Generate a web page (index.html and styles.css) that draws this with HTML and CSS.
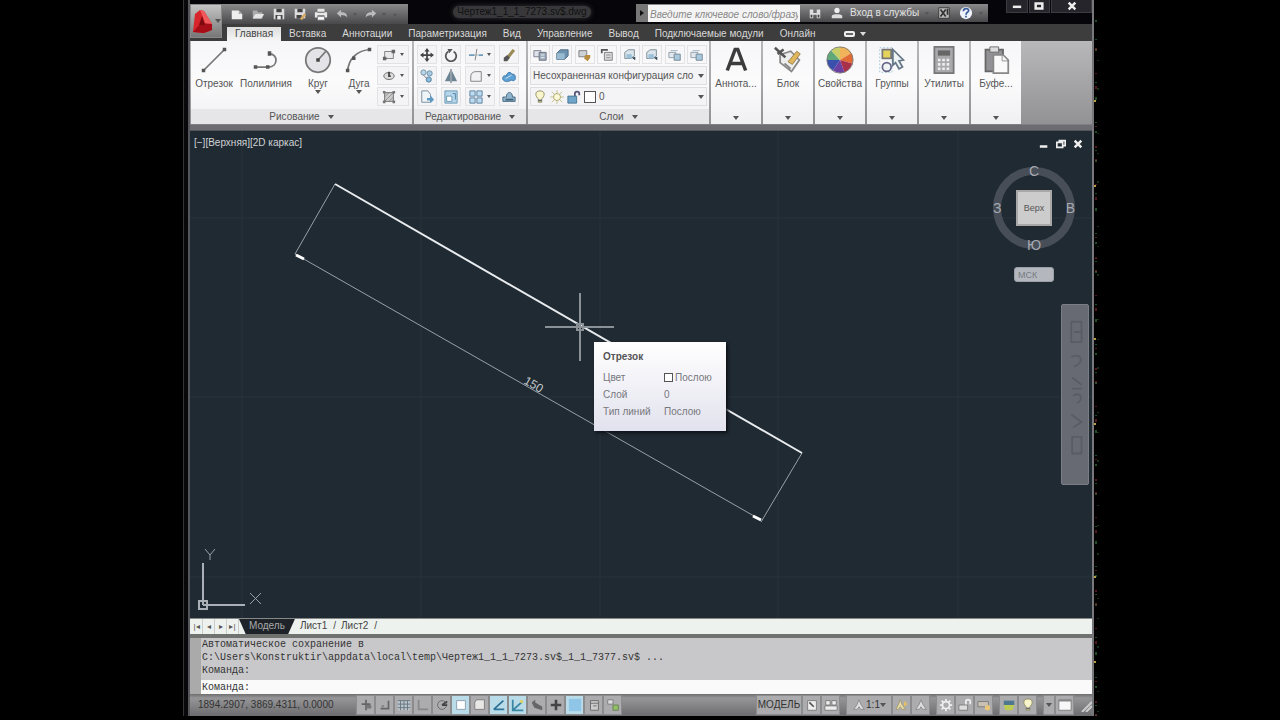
FILE: index.html
```html
<!DOCTYPE html>
<html lang="ru">
<head>
    <meta charset="UTF-8">
    <meta name="viewport" content="width=device-width, initial-scale=1.0">
    <title>Чертеж1_1_1_7273.sv$.dwg</title>
    <link rel="stylesheet" href="styles.css">
</head>
<body>
    <!-- Icon sprite -->
    <svg class="sprite" aria-hidden="true">
        <symbol id="i-new" viewBox="0 0 16 16"><path d="M2 4h8l4 4v6H2z" fill="#eee"/><path d="M10 4v4h4" fill="#aaa"/></symbol>
        <symbol id="i-open" viewBox="0 0 16 16"><path d="M2 4h5l1 2h5v7H2z" fill="#aaa"/><path d="M5 8h10l-3 5H2z" fill="#e4e4e4"/></symbol>
        <symbol id="i-save" viewBox="0 0 16 16"><path d="M2 2h12v12H2z" fill="#ddd"/><path d="M5 2h6v4H5zM4 9h8v5H4z" fill="#444"/><path d="M6 10h4v4H6z" fill="#eee"/></symbol>
        <symbol id="i-saveas" viewBox="0 0 16 16"><path d="M2 2h12v11H2z" fill="#ddd"/><path d="M5 2h6v4H5zM4 9h6v4H4z" fill="#444"/><path d="m8 13 5-6 2 2-5 6z" fill="#d9a860"/></symbol>
        <symbol id="i-print" viewBox="0 0 16 16"><path d="M4 2h8v4H4zM1 6h14v6H1z" fill="#e8e8e8"/><path d="M4 6h8M4 10h8" stroke="#555"/><path d="M4 11h8v4H4z" fill="#fff" stroke="#777"/></symbol>
        <symbol id="i-undo" viewBox="0 0 16 16"><path d="M2 7l5-4v3c5 0 7 2 7 6-1-2-3-3-7-3v3z" fill="#bbb"/></symbol>
        <symbol id="i-redo" viewBox="0 0 16 16"><path d="M14 7 9 3v3c-5 0-7 2-7 6 1-2 3-3 7-3v3z" fill="#bbb"/></symbol>
        <symbol id="i-find" viewBox="0 0 16 16"><path d="M2 4h4v4h4V4h4v10h-4v-4H6v4H2z" fill="#ddd"/><path d="M3 10h2v3H3zM11 10h2v3h-2z" fill="#444"/></symbol>
        <symbol id="i-user" viewBox="0 0 16 16"><circle cx="8" cy="5" r="3" fill="#eee"/><path d="M2 14v-3c2-2 10-2 12 0v3z" fill="#ddd"/></symbol>
        <symbol id="i-exchange" viewBox="0 0 16 16"><path d="M2 2h12v12H2z" fill="#bbb" stroke="#333"/><path d="m4 4 6 8M10 4l-6 8M12 3v7" stroke="#333" stroke-width="2"/></symbol>
        <symbol id="i-help" viewBox="0 0 16 16"><circle cx="8" cy="8" r="7" fill="#eef2fa"/><path d="M5 6c0-4 6-4 6-1 0 2-3 2-3 5M8 11v2" fill="none" stroke="#3b5c9a" stroke-width="2"/></symbol>

        <symbol id="i-rect" viewBox="0 0 16 16"><path d="M3 4h10v8H3z" fill="#e9e9ec" stroke="#777"/><path d="M1 10h4v4H1zM11 2h4v4h-4z" fill="#666"/></symbol>
        <symbol id="i-ellipse" viewBox="0 0 16 16"><ellipse cx="8" cy="8" rx="6" ry="4" fill="#ddd" stroke="#666"/><path d="M8 3v6M7 8h3" stroke="#444" stroke-width="2"/></symbol>
        <symbol id="i-hatch" viewBox="0 0 16 16"><path d="M3 3h10v10H3z" fill="#ccc" stroke="#666"/><path d="m3 8 5-5M3 13 13 3M8 13l5-5" stroke="#888"/><path d="M1 1h3v3H1zM12 1h3v3h-3zM1 12h3v3H1zM12 12h3v3h-3z" fill="#777"/></symbol>
        <symbol id="i-move" viewBox="0 0 16 16"><path d="M8 2v12M2 8h12" stroke="#444" stroke-width="2"/><path d="m8 0 3 4H5zM8 16l3-4H5zM0 8l4-3v6zM16 8l-4-3v6z" fill="#444"/></symbol>
        <symbol id="i-rotate" viewBox="0 0 16 16"><path d="M5 4a6 6 0 1 0 6 0" fill="none" stroke="#555" stroke-width="2"/><path d="M4 1h6L6 6z" fill="#555"/></symbol>
        <symbol id="i-trim" viewBox="0 0 16 16"><path d="M0 8h6M11 8h5" stroke="#6f9dbb" stroke-width="2"/><path d="M9 1 7 14" stroke="#777"/><path d="M5 8h6" stroke="#89a" stroke-dasharray="2 1"/></symbol>
        <symbol id="i-erase" viewBox="0 0 16 16"><path d="m5 10 7-9 3 2-7 9z" fill="#9a8b55"/><path d="m2 11 4-3 3 3-3 4H2z" fill="#555"/></symbol>
        <symbol id="i-copy" viewBox="0 0 16 16"><circle cx="4" cy="4" r="3" fill="#bcd5e6" stroke="#6b8ba2"/><circle cx="11" cy="5" r="3" fill="#a6c9e2" stroke="#6b8ba2"/><circle cx="10" cy="12" r="3" fill="#8bbbdc" stroke="#4f7c9b"/><path d="m4 7 4 4" stroke="#667"/></symbol>
        <symbol id="i-mirror" viewBox="0 0 16 16"><path d="M7 2v12H1zM9 2v12h6z" fill="#6b8494"/><path d="M8 0v16" stroke="#345"/></symbol>
        <symbol id="i-fillet" viewBox="0 0 16 16"><path d="M2 14V9c0-4 2-6 6-6h6v11z" fill="#f2f2f4" stroke="#777"/></symbol>
        <symbol id="i-cloud" viewBox="0 0 16 16"><path d="M1 12c-1-4 2-5 4-4 0-4 5-6 6-2 4-1 5 3 4 6-2 3-4 0-5 1-3 2-7 2-9-1z" fill="#5fa0d2" stroke="#3674a5"/><path d="m4 11 7-4" stroke="#d4e8f6"/></symbol>
        <symbol id="i-stretch" viewBox="0 0 16 16"><path d="M2 1h7l3 4v9H2z" fill="#eef4f8" stroke="#71879a"/><path d="M8 9h4V6l4 5-4 4v-3H8z" fill="#5c9ac4"/></symbol>
        <symbol id="i-scale" viewBox="0 0 16 16"><path d="M1 1h14v14H1z" fill="#b5d6ea" stroke="#6492b0"/><path d="M3 7h6v6H3z" fill="#fff" stroke="#6492b0"/><path d="M10 4h3v7" fill="none" stroke="#4d7f9f"/></symbol>
        <symbol id="i-array" viewBox="0 0 16 16"><g fill="#bddcf0" stroke="#55799a"><path d="M1 1h6v6H1zM9 1h6v6H9zM1 9h6v6H1zM9 9h6v6H9z"/></g></symbol>
        <symbol id="i-offset" viewBox="0 0 16 16"><path d="M1 13V8h4c0-7 7-7 7 0h3v5z" fill="#8fb4cc" stroke="#41627a"/><path d="M4 11h9" stroke="#41627a" stroke-width="2"/></symbol>

        <symbol id="i-layer1" viewBox="0 0 16 16"><path d="M1 3h8v7H1z" fill="#dde3e8" stroke="#778"/><path d="M7 5h8v9H7z" fill="#9fb1bf" stroke="#667"/><path d="M9 8h4M9 11h4" stroke="#eee"/></symbol>
        <symbol id="i-layer2" viewBox="0 0 16 16"><path d="M2 6l4-4h9v7l-4 4H2z" fill="#6c93b0" stroke="#4b667c"/><path d="M2 6h9v7H2z" fill="#99bbd2"/></symbol>
        <symbol id="i-layer3" viewBox="0 0 16 16"><path d="M1 3h9v7H1z" fill="#ccd2d8" stroke="#777"/><path d="M8 8h6v3l-3 4-4-3z" fill="#b98d3f"/></symbol>
        <symbol id="i-layer4" viewBox="0 0 16 16"><path d="M5 5h9v9H5z" fill="#d8dadd" stroke="#777"/><path d="M1 2h8M2 1v5" stroke="#555" stroke-width="2"/><path d="M7 8h5M7 11h5" stroke="#888"/></symbol>
        <symbol id="i-layer5" viewBox="0 0 16 16"><path d="M2 5l4-3h7v7l-4 3H2z" fill="#dbe4eb" stroke="#71838f"/><path d="M4 7h6v5H4z" fill="#9bc0d8"/><path d="m10 11 4 3v-4z" fill="#345"/></symbol>
        <symbol id="i-layer6" viewBox="0 0 16 16"><path d="M1 5h8v6H1z" fill="#e1e7ec" stroke="#8a9aa5"/><path d="M7 7h7v7H7z" fill="#a9c8dc" stroke="#6e8495"/><path d="M3 3h8" stroke="#9ab"/></symbol>

        <symbol id="i-bulb" viewBox="0 0 16 16"><path d="M8 1c7 0 5 7 2 9v4H6v-4C3 8 1 1 8 1z" fill="#f7f5c9" stroke="#8c8a60"/><path d="M6 12h4" stroke="#666" stroke-width="2"/></symbol>
        <symbol id="i-sun" viewBox="0 0 16 16"><path d="M8 0v16M0 8h16M2 2l12 12M14 2 2 14" stroke="#c1bd86"/><circle cx="8" cy="8" r="4" fill="#fbf9d8" stroke="#aaa463"/></symbol>
        <symbol id="i-lock" viewBox="0 0 16 16"><path d="M9 8V4c0-3 5-3 5 0v2" fill="none" stroke="#557" stroke-width="2"/><path d="M1 7h10v8H1z" fill="#6ea5c8" stroke="#44708f"/></symbol>

        <symbol id="i-dot" viewBox="0 0 16 16"><path d="M8 2v12M3 7h10" stroke="#666" stroke-width="2"/><path d="M8 8h6v4H8z" fill="#777"/></symbol>
        <symbol id="i-snap" viewBox="0 0 16 16"><path d="M12 3v9H3" fill="none" stroke="#666" stroke-width="2"/><path d="M4 8h3v3H4z" fill="#888"/></symbol>
        <symbol id="i-grid" viewBox="0 0 16 16"><path d="M1 3h14v11H1z" fill="#b8c4cc"/><path d="M1 3h14M1 7h14M1 11h14M4 3v11M8 3v11M12 3v11" stroke="#66727a"/></symbol>
        <symbol id="i-ortho" viewBox="0 0 16 16"><path d="M3 2v11h11" fill="none" stroke="#888" stroke-width="2"/></symbol>
        <symbol id="i-polar" viewBox="0 0 16 16"><circle cx="8" cy="8" r="5" fill="none" stroke="#666"/><path d="m8 8 6-4M8 8h6" stroke="#444" stroke-width="2"/></symbol>
        <symbol id="i-osnap" viewBox="0 0 16 16"><path d="M3 3h10v10H3z" fill="#fff" stroke="#89a"/></symbol>
        <symbol id="i-osnap3" viewBox="0 0 16 16"><path d="M4 2h9v11H2V5z" fill="#e9e6e6" stroke="#777"/></symbol>
        <symbol id="i-track" viewBox="0 0 16 16"><path d="M2 13h12M2 13 13 3" stroke="#2f7398" stroke-width="2"/></symbol>
        <symbol id="i-ducs" viewBox="0 0 16 16"><path d="M2 2v12h12M2 14 12 5" fill="none" stroke="#3b86a3" stroke-width="2"/><circle cx="12" cy="4" r="2" fill="#dcd26c"/></symbol>
        <symbol id="i-dyn" viewBox="0 0 16 16"><path d="m2 5 4-3v3l8 5v4l-9-3z" fill="#666"/></symbol>
        <symbol id="i-plus" viewBox="0 0 16 16"><path d="M8 2v12M2 8h12" stroke="#444" stroke-width="3"/></symbol>
        <symbol id="i-fill" viewBox="0 0 16 16"><path d="M1 1h14v14H1z" fill="#8fc6e8"/></symbol>
        <symbol id="i-props" viewBox="0 0 16 16"><path d="M4 3h9v11H4z" fill="#ccc" stroke="#666"/><path d="M4 6h9M7 9h4" stroke="#666"/></symbol>
        <symbol id="i-cycle" viewBox="0 0 16 16"><path d="M2 2h6v5H2z" fill="#ddd" stroke="#777"/><path d="M8 8h6v6H8z" fill="#93c16a" stroke="#627f49"/></symbol>
        <symbol id="i-page" viewBox="0 0 16 16"><path d="M3 3h10v11H3z" fill="#eee" stroke="#777"/><path d="m5 5 5 5" stroke="#555" stroke-width="2"/></symbol>
        <symbol id="i-views" viewBox="0 0 16 16"><path d="M1 9h14v5H1zM2 3h5v5H2zM9 3h5v5H9z" fill="#eee" stroke="#777"/></symbol>
        <symbol id="i-person" viewBox="0 0 16 16"><path d="m8 2 2 5 4 6h-4l-2-3-2 3H2l4-6z" fill="#ddd" stroke="#888"/></symbol>
        <symbol id="i-person2" viewBox="0 0 16 16"><path d="m6 2 2 5 4 6H8l-2-3-2 3H1l3-6z" fill="#e8d8a4" stroke="#997"/><path d="m11 3 3 4-4 3z" fill="#e9c25e"/></symbol>
        <symbol id="i-gear" viewBox="0 0 16 16"><path d="M8 1v14M1 8h14M3 3l10 10M13 3 3 13" stroke="#eee" stroke-width="2"/><circle cx="8" cy="8" r="4" fill="#aaa" stroke="#eee" stroke-width="2"/></symbol>
        <symbol id="i-lock2" viewBox="0 0 16 16"><path d="M9 8V4c0-3 5-3 5 0v3" fill="none" stroke="#eee" stroke-width="2"/><path d="M1 8h10v6H1z" fill="#ddd" stroke="#777"/></symbol>
        <symbol id="i-hw" viewBox="0 0 16 16"><path d="M1 4h12v6H1z" fill="#c9c1b4" stroke="#777"/><circle cx="12" cy="11" r="3" fill="#eac67a"/></symbol>
        <symbol id="i-status" viewBox="0 0 16 16"><path d="M2 3h12v5H2z" fill="#4e7790"/><path d="M2 8h12l-2 6H4z" fill="#bccb56"/></symbol>
        <symbol id="i-full" viewBox="0 0 16 16"><path d="M1 2h14v12H1z" fill="#f8f8f8" stroke="#777"/><path d="M1 3h14" stroke="#888" stroke-width="2"/></symbol>
    </svg>

    <div class="window">
        <header class="header">
            <button class="app-button" aria-label="Меню приложения">
                <svg width="22" height="28" viewBox="0 0 22 28">
                    <path d="M1 25 3 7 8 3l4 1 8 13v6l-8 3z" fill="#d8242b"/>
                    <path d="m8 3 4 1 8 13-6 1z" fill="#f0595c"/>
                    <path d="m1 25 8-9 11 1v6l-8 3z" fill="#a50e17"/>
                    <path d="m7 18 3-9 3 9z" fill="#7b0a10"/>
                </svg>
                <span class="caret"></span>
            </button>
            <div class="header-rows">
                <div class="titlebar">
                    <div class="quick-access">
                        <button aria-label="Создать"><svg><use href="#i-new"/></svg></button>
                        <button aria-label="Открыть"><svg><use href="#i-open"/></svg></button>
                        <button aria-label="Сохранить"><svg><use href="#i-save"/></svg></button>
                        <button aria-label="Сохранить как"><svg><use href="#i-saveas"/></svg></button>
                        <button aria-label="Печать"><svg><use href="#i-print"/></svg></button>
                        <button class="with-caret" aria-label="Отменить"><svg><use href="#i-undo"/></svg><span class="caret"></span></button>
                        <button class="with-caret" aria-label="Повторить"><svg><use href="#i-redo"/></svg><span class="caret"></span></button>
                        <button aria-label="Настройка панели"><span class="caret"></span></button>
                    </div>
                    <div class="title"><span>Чертеж1_1_1_7273.sv$.dwg</span></div>
                    <div class="infocenter">
                        <button class="expand" aria-label="Свернуть поиск"><span class="caret-right"></span></button>
                        <input type="text" aria-label="Поиск" placeholder="Введите ключевое слово/фразу">
                        <button aria-label="Найти"><svg><use href="#i-find"/></svg></button>
                        <button class="login"><svg><use href="#i-user"/></svg>Вход в службы<span class="caret"></span></button>
                        <button aria-label="Exchange"><svg><use href="#i-exchange"/></svg></button>
                        <button class="help" aria-label="Справка"><svg><use href="#i-help"/></svg><span class="caret"></span></button>
                    </div>
                    <div class="window-controls">
                        <button aria-label="Свернуть"><svg viewBox="0 0 12 12"><path d="M1 7h10" stroke="#eee" stroke-width="3"/></svg></button>
                        <button aria-label="Развернуть"><svg viewBox="0 0 12 12"><path d="M2 3h8v6H2z" fill="none" stroke="#eee" stroke-width="3"/></svg></button>
                        <button class="close" aria-label="Закрыть"><svg viewBox="0 0 12 12"><path d="m2 2 8 8M10 2l-8 8" stroke="#eee" stroke-width="3"/></svg></button>
                    </div>
                </div>
                <nav class="tabs">
                    <a class="active" href="#">Главная</a>
                    <a href="#">Вставка</a>
                    <a href="#">Аннотации</a>
                    <a href="#">Параметризация</a>
                    <a href="#">Вид</a>
                    <a href="#">Управление</a>
                    <a href="#">Вывод</a>
                    <a href="#">Подключаемые модули</a>
                    <a href="#">Онлайн</a>
                    <button class="tab-toggle" aria-label="Свернуть ленту"><span class="pill"></span><span class="caret"></span></button>
                </nav>
            </div>
        </header>

        <section class="ribbon">
            <div class="panel draw">
                <div class="panel-body">
                    <button class="tool">
                        <svg viewBox="0 0 32 32"><path d="M4 28 28 4" stroke="#777" stroke-width="2"/><path d="M2 26h4v4H2zM26 2h4v4h-4z" fill="#555"/></svg>
                        Отрезок
                    </button>
                    <button class="tool wide">
                        <svg viewBox="0 0 32 32"><path d="M4 24h15c11 0 11-15 1-15" fill="none" stroke="#777" stroke-width="2"/><path d="M2 22h4v4H2zM16 22h4v4h-4zM18 6h4v5h-4z" fill="#555"/></svg>
                        Полилиния
                    </button>
                    <button class="tool">
                        <svg viewBox="0 0 32 32"><circle cx="16" cy="16" r="14" fill="#e3e3e8" stroke="#777" stroke-width="2"/><path d="M16 16 25 6" stroke="#777" stroke-width="2"/><path d="M14 14h4v4h-4z" fill="#444"/></svg>
                        Круг
                        <span class="caret"></span>
                    </button>
                    <button class="tool narrow">
                        <svg viewBox="0 0 32 32"><path d="M3 29C4 14 14 5 29 4" fill="none" stroke="#777" stroke-width="2"/><path d="M1 26h4v4H1zM26 2h4v4h-4zM8 12h4v4H8z" fill="#555"/></svg>
                        Дуга
                        <span class="caret"></span>
                    </button>
                    <div class="small-grid">
                        <button class="with-caret" aria-label="Прямоугольник"><svg><use href="#i-rect"/></svg><span class="caret"></span></button>
                        <button class="with-caret" aria-label="Эллипс"><svg><use href="#i-ellipse"/></svg><span class="caret"></span></button>
                        <button class="with-caret" aria-label="Штриховка"><svg><use href="#i-hatch"/></svg><span class="caret"></span></button>
                    </div>
                </div>
                <button class="panel-title">Рисование <span class="caret"></span></button>
            </div>

            <div class="panel modify">
                <div class="panel-body">
                    <div class="small-grid four">
                        <button aria-label="Перенести"><svg><use href="#i-move"/></svg></button>
                        <button aria-label="Повернуть"><svg><use href="#i-rotate"/></svg></button>
                        <button class="with-caret" aria-label="Обрезать"><svg><use href="#i-trim"/></svg><span class="caret"></span></button>
                        <button aria-label="Стереть"><svg><use href="#i-erase"/></svg></button>
                        <button aria-label="Копировать"><svg><use href="#i-copy"/></svg></button>
                        <button aria-label="Зеркало"><svg><use href="#i-mirror"/></svg></button>
                        <button class="with-caret" aria-label="Сопряжение"><svg><use href="#i-fillet"/></svg><span class="caret"></span></button>
                        <button aria-label="Расчленить"><svg><use href="#i-cloud"/></svg></button>
                        <button aria-label="Растянуть"><svg><use href="#i-stretch"/></svg></button>
                        <button aria-label="Масштаб"><svg><use href="#i-scale"/></svg></button>
                        <button class="with-caret" aria-label="Массив"><svg><use href="#i-array"/></svg><span class="caret"></span></button>
                        <button aria-label="Подобие"><svg><use href="#i-offset"/></svg></button>
                    </div>
                </div>
                <button class="panel-title">Редактирование <span class="caret"></span></button>
            </div>

            <div class="panel layers">
                <div class="panel-body column">
                    <div class="layer-tools">
                        <button aria-label="Свойства слоя"><svg><use href="#i-layer1"/></svg></button>
                        <button aria-label="Сделать текущим"><svg><use href="#i-layer2"/></svg></button>
                        <button aria-label="Согласовать"><svg><use href="#i-layer3"/></svg></button>
                        <button aria-label="Предыдущий"><svg><use href="#i-layer4"/></svg></button>
                        <button aria-label="Изолировать"><svg><use href="#i-layer5"/></svg></button>
                        <button aria-label="Заморозить"><svg><use href="#i-layer5"/></svg></button>
                        <button aria-label="Отключить"><svg><use href="#i-layer6"/></svg></button>
                        <button aria-label="Включить все"><svg><use href="#i-layer6"/></svg></button>
                    </div>
                    <div class="combo">
                        <select aria-label="Конфигурация слоев"><option>Несохраненная конфигурация сло</option></select>
                        <span class="caret"></span>
                    </div>
                    <div class="combo">
                        <svg><use href="#i-bulb"/></svg>
                        <svg><use href="#i-sun"/></svg>
                        <svg><use href="#i-lock"/></svg>
                        <span class="swatch"></span>
                        <select aria-label="Слой"><option>0</option></select>
                        <span class="caret"></span>
                    </div>
                </div>
                <button class="panel-title">Слои <span class="caret"></span></button>
            </div>

            <button class="panel collapsed">
                <svg viewBox="0 0 32 32"><path d="M6 28 15 4h3l9 24M10 20h13" fill="none" stroke="#3c3c3c" stroke-width="4"/></svg>
                Аннота...
                <span class="caret"></span>
            </button>
            <button class="panel collapsed">
                <svg viewBox="0 0 32 32"><path d="m7 10 12-4 10 10-9 13-13-10z" fill="#ededed" stroke="#888" stroke-width="2"/><path d="m1 2 12 11M4 9l7-5" stroke="#555" stroke-width="3"/><path d="m16 18 10-12 4 3-9 12z" fill="#dfb65b" stroke="#927b4a"/><path d="m12 20 7 6" stroke="#888" stroke-width="2"/></svg>
                Блок
                <span class="caret"></span>
            </button>
            <button class="panel collapsed">
                <svg viewBox="0 0 32 32">
                    <path d="M16 16V1a15 15 0 0 1 13 7z" fill="#f0b35a"/>
                    <path d="M16 16 29 8a15 15 0 0 1 1 12z" fill="#e26a34"/>
                    <path d="m16 16 14 4a15 15 0 0 1-9 10z" fill="#a8304a"/>
                    <path d="m16 16 5 14a15 15 0 0 1-13-2z" fill="#6b40a0"/>
                    <path d="M16 16 8 28a15 15 0 0 1-7-12z" fill="#3b50ad"/>
                    <path d="M16 16H1A15 15 0 0 1 6 5z" fill="#60a878"/>
                    <path d="M16 16 6 5a15 15 0 0 1 10-4z" fill="#c9cf68"/>
                    <circle cx="16" cy="16" r="15" fill="none" stroke="#777"/>
                </svg>
                Свойства
                <span class="caret"></span>
            </button>
            <button class="panel collapsed">
                <svg viewBox="0 0 32 32"><path d="M2 2h14v28H2z" fill="none" stroke="#9ac4d6" stroke-dasharray="2 2"/><path d="M5 4h10v10H5z" fill="#e5d45c" stroke="#777" stroke-width="2"/><circle cx="10" cy="24" r="5" fill="#eef4f4" stroke="#668"  stroke-width="2"/><path d="m17 4 12 12-5 1 4 7-4 2-4-7-3 3z" fill="#eef3f3" stroke="#678" stroke-width="2"/></svg>
                Группы
                <span class="caret"></span>
            </button>
            <button class="panel collapsed">
                <svg viewBox="0 0 32 32"><path d="M5 1h22v30H5z" fill="#a9a9ad" stroke="#777" stroke-width="2"/><path d="M9 5h14v6H9z" fill="#666"/><path d="M9 16h14M9 21h14M9 26h14" stroke="#eee" stroke-width="3" stroke-dasharray="3 2"/></svg>
                Утилиты
                <span class="caret"></span>
            </button>
            <button class="panel collapsed">
                <svg viewBox="0 0 32 32"><path d="M4 4h20v25H4z" fill="#929296" stroke="#666" stroke-width="2"/><path d="M9 1h10v6H9z" fill="#ddd" stroke="#666"/><path d="M13 10h11l6 6v15H13z" fill="#fafafa" stroke="#888" stroke-width="2"/><path d="M23 10v7h7" fill="none" stroke="#888"/></svg>
                Буфе...
                <span class="caret"></span>
            </button>
        </section>

        <main class="canvas">
            <svg class="drawing">
                <path class="grid-line" d="M52 0v2000M231 0v2000M410 0v2000M588 0v2000M768 0v2000M0 87h4000M0 266h4000M0 446h4000"/>
                <path class="dim-line" d="M145 53 105 123M612 322 571 391M105 123 571 389"/>
                <path class="dim-arrow" d="m106 124 8 4M563 385l8 4"/>
                <path class="object-line" d="M145 53 612 322"/>
                <text class="dim-text" transform="translate(333 252) rotate(30)">150</text>
                <path class="cursor" d="M355 196h69M390 162v68M387 193h6v6h-6z"/>
            </svg>

            <div class="viewport-label">[−][Верхняя][2D каркас]</div>
            <div class="viewport-controls">
                <button aria-label="Свернуть вид"><svg viewBox="0 0 12 12"><path d="M1 9h9" stroke="#eee" stroke-width="3"/></svg></button>
                <button aria-label="Восстановить вид"><svg viewBox="0 0 12 12"><path d="M4 4V2h7v6H9M1 4h7v6H1z" fill="none" stroke="#eee" stroke-width="2"/></svg></button>
                <button aria-label="Закрыть вид"><svg viewBox="0 0 12 12"><path d="m2 2 8 8M10 2l-8 8" stroke="#eee" stroke-width="3"/></svg></button>
            </div>

            <div class="viewcube">
                <span class="north">С</span>
                <span class="west">З</span>
                <button>Верх</button>
                <span class="east">В</span>
                <span class="south">Ю</span>
            </div>
            <button class="ucs-menu">МСК</button>
            <div class="navbar">
                <svg viewBox="0 0 28 180"><g fill="none" stroke="#5a5c65" stroke-width="2"><path d="M10 18h11v22H10zM13 29h8M10 56c12-6 14 8 3 10M11 78l10 8M11 90h11M12 98c8-6 12 4 4 8M10 118l11 8-9 6M11 142h10v18H11z"/></g></svg>
            </div>

            <svg class="ucs-icon" viewBox="0 0 80 72">
                <path d="M13 17v42M13 59h42M9 55h8v8H9z" fill="none" stroke="#aab0b5" stroke-width="2"/>
                <path d="m15 3 5 6 5-6M20 9v5M60 47l11 11M71 47 60 58" fill="none" stroke="#99a1a7"/>
            </svg>

            <div class="tooltip">
                <h2>Отрезок</h2>
                <dl>
                    <dt>Цвет</dt><dd><span class="swatch"></span>Послою</dd>
                    <dt>Слой</dt><dd>0</dd>
                    <dt>Тип линий</dt><dd>Послою</dd>
                </dl>
            </div>
        </main>

        <nav class="layout-tabs">
            <button aria-label="Первый лист">|◂</button>
            <button aria-label="Предыдущий лист">◂</button>
            <button aria-label="Следующий лист">▸</button>
            <button aria-label="Последний лист">▸|</button>
            <a class="current" href="#">Модель</a>
            <a href="#">Лист1</a>
            <a href="#">Лист2</a>
        </nav>

        <section class="command">
            <div class="command-log">Автоматическое сохранение в<br>C:\Users\Konstruktir\appdata\local\temp\Чертеж1_1_1_7273.sv$_1_1_7377.sv$ ...<br>Команда:</div>
            <div class="command-line">
                <label for="command-input">Команда:</label>
                <input id="command-input" type="text">
            </div>
        </section>

        <footer class="status">
            <div class="coords">1894.2907, 3869.4311, 0.0000</div>
            <div class="modes">
                <button aria-label="Зависимости"><svg><use href="#i-dot"/></svg></button>
                <button aria-label="Шаг"><svg><use href="#i-snap"/></svg></button>
                <button aria-label="Сетка"><svg><use href="#i-grid"/></svg></button>
                <button aria-label="Орто"><svg><use href="#i-ortho"/></svg></button>
                <button aria-label="Отслеживание"><svg><use href="#i-polar"/></svg></button>
                <button class="on" aria-label="Привязка"><svg><use href="#i-osnap"/></svg></button>
                <button aria-label="3D привязка"><svg><use href="#i-osnap3"/></svg></button>
                <button class="on" aria-label="Объектное отслеживание"><svg><use href="#i-track"/></svg></button>
                <button class="on" aria-label="ДПСК"><svg><use href="#i-ducs"/></svg></button>
                <button aria-label="Динамический ввод"><svg><use href="#i-dyn"/></svg></button>
                <button aria-label="Вес линий"><svg><use href="#i-plus"/></svg></button>
                <button class="on" aria-label="Прозрачность"><svg><use href="#i-fill"/></svg></button>
                <button aria-label="Быстрые свойства"><svg><use href="#i-props"/></svg></button>
                <button aria-label="Циклический выбор"><svg><use href="#i-cycle"/></svg></button>
            </div>
            <div class="modes right">
                <button class="text">МОДЕЛЬ</button>
                <button aria-label="Листы"><svg><use href="#i-page"/></svg></button>
                <button aria-label="Виды"><svg><use href="#i-views"/></svg></button>
            </div>
            <div class="modes">
                <button class="text scale"><svg><use href="#i-person"/></svg>1:1<span class="caret"></span></button>
                <button aria-label="Видимость аннотаций"><svg><use href="#i-person2"/></svg></button>
                <button aria-label="Автомасштаб"><svg><use href="#i-person"/></svg></button>
            </div>
            <div class="modes">
                <button aria-label="Рабочее пространство"><svg><use href="#i-gear"/></svg></button>
                <button aria-label="Блокировка"><svg><use href="#i-lock2"/></svg></button>
                <button aria-label="Ускорение"><svg><use href="#i-hw"/></svg></button>
            </div>
            <div class="modes">
                <button aria-label="Состояние"><svg><use href="#i-status"/></svg></button>
                <button aria-label="Изоляция объектов"><svg><use href="#i-bulb"/></svg></button>
            </div>
            <div class="modes">
                <button class="menu" aria-label="Меню строки состояния"><span class="caret"></span></button>
                <button aria-label="Очистить экран"><svg><use href="#i-full"/></svg></button>
            </div>
            <svg class="grip" viewBox="0 0 12 14"><path d="M2 14 12 4M6 14l6-6" stroke="#ccc" stroke-width="2"/></svg>
        </footer>

        <!-- Speckled edge along the right side -->
        <svg class="noise">
            <path d="M4 20v3000" stroke="#3f9a4b" stroke-dasharray="2 17 1 9 2 31 1 14 3 22 1 8"/>
            <path d="M4 48v3000" stroke="#a03038" stroke-dasharray="2 23 1 12 3 37 1 19 2 11"/>
            <path d="M3 100v3000" stroke="#b8a040" stroke-width="2" stroke-dasharray="2 83 2 151"/>
            <path d="M6 60v3000" stroke="#2b5e33" stroke-dasharray="1 27 2 43 1 19"/>
        </svg>
    </div>
</body>
</html>
```

FILE: styles.css
```css
* {
    box-sizing: border-box;
}

body {
    margin: 0;
    padding: 0 186px 4px 188px;
    background-color: #000;
    font-family: "Liberation Sans", Arial, sans-serif;
    font-size: 10px;
    line-height: 12px;
    color: #555;
}

button,
input,
select {
    margin: 0;
    padding: 0;
    border: none;
    background: none;
    font: inherit;
    color: inherit;
}

a {
    color: inherit;
    text-decoration: none;
}

.sprite {
    position: absolute;
    width: 0;
    height: 0;
}

.window {
    position: relative;
    display: flex;
    flex-direction: column;
    min-height: calc(100vh - 4px);
    border-left: 2px solid #55555c;
    border-right: 2px solid #77777c;
    box-shadow: -4px 0 0 #08080a, -5px 0 0 #333338;
}

.caret {
    display: inline-block;
    flex: none;
    border: 3px solid transparent;
    border-top: 4px solid #555;
    border-bottom: none;
}

.caret-right {
    border: 3px solid transparent;
    border-left: 4px solid #111;
    border-right: none;
}

/* Header */
.header {
    display: flex;
    background: linear-gradient(#06060a 24px, #3d3d3d 24px);
}

.header-rows {
    flex: 1;
    min-width: 0;
}

.app-button {
    display: flex;
    align-items: center;
    justify-content: center;
    gap: 1px;
    width: 32px;
    height: 34px;
    margin-top: 4px;
    background: linear-gradient(#c4c4c4, #777);
    border: 1px solid #888;
}

.titlebar {
    display: flex;
    height: 24px;
}

.titlebar svg {
    display: block;
    width: 14px;
    height: 14px;
}

.quick-access,
.infocenter {
    display: flex;
    align-items: center;
    margin-top: 4px;
    height: 20px;
    background: linear-gradient(#8a8a8c, #48484a);
}

.quick-access {
    width: 186px;
    gap: 7px;
    padding: 0 6px 0 8px;
}

.with-caret {
    display: flex;
    align-items: center;
    gap: 4px;
}

.title {
    flex: 1;
    display: flex;
    align-items: center;
    justify-content: center;
    min-width: 0;
    overflow: hidden;
    white-space: nowrap;
    color: #111;
}

.title span {
    padding: 0 4px;
    border-radius: 6px;
    background-color: #38383b;
    box-shadow: 0 0 5px #38383b;
}

.infocenter {
    width: 352px;
    height: 18px;
    gap: 8px;
    color: #e2e2e2;
}

.infocenter .expand {
    display: flex;
    justify-content: center;
    align-items: center;
    width: 12px;
    height: 18px;
    margin-right: -8px;
    background-color: #777;
}

.infocenter input {
    width: 152px;
    height: 17px;
    padding: 2px 2px 0;
    background-color: #f4f4f4;
    font-style: italic;
}

.infocenter input::placeholder {
    color: #888;
    opacity: 1;
}

.login,
.help {
    display: flex;
    align-items: center;
    gap: 6px;
}

.login {
    white-space: nowrap;
}

.window-controls {
    display: flex;
    gap: 1px;
    width: 86px;
    height: 13px;
    margin-left: 18px;
}

.window-controls button {
    flex: 1;
    display: flex;
    justify-content: center;
    align-items: center;
    background-color: #25252b;
    border: 1px solid #3b3b42;
    border-top: none;
}

.window-controls .close {
    flex: 2;
}

.window-controls svg {
    width: 10px;
    height: 10px;
}

/* Ribbon tabs */
.tabs {
    display: flex;
    height: 17px;
    padding: 3px 0 0 5px;
    line-height: 13px;
    color: #d8d8d8;
    white-space: nowrap;
}

.tabs a {
    padding: 0 8px;
}

.tabs .active {
    background: linear-gradient(#ddd, #f6f6f7);
    color: #444;
}

.tab-toggle {
    display: flex;
    align-items: center;
    gap: 5px;
    margin-left: 20px;
}

.pill {
    width: 11px;
    height: 6px;
    border: 2px solid #eee;
    border-radius: 2px;
    background-color: #666;
}

.tabs .caret {
    border-top-color: #ddd;
}

/* Ribbon */
.ribbon {
    display: flex;
    gap: 2px;
    height: 90px;
    padding: 0 0 6px 1px;
    border-bottom: 1px solid #55555a;
    background: linear-gradient(#b8b8bb, #929295 83px, #6c6c72 84px);
}

.panel {
    display: flex;
    flex-direction: column;
    background: linear-gradient(#f6f6f8, #fbfbfc 40px, #f0f0f2);
}

.draw {
    width: 221px;
}

.modify {
    width: 112px;
}

.layers {
    width: 181px;
}

.panel-body {
    display: flex;
    flex: 1;
    padding-top: 4px;
}

.panel-title {
    display: flex;
    justify-content: center;
    align-items: center;
    gap: 8px;
    height: 15px;
    background-color: #e6e6e9;
}

.tool {
    display: flex;
    flex-direction: column;
    align-items: center;
    width: 46px;
    padding-top: 1px;
}

.tool.wide {
    width: 58px;
}

.tool.narrow {
    width: 36px;
}

.tool svg,
.collapsed svg {
    display: block;
    width: 28px;
    height: 28px;
    margin-bottom: 4px;
}

.small-grid {
    display: grid;
    grid-auto-rows: 19px;
    row-gap: 2px;
    column-gap: 4px;
}

.small-grid.four {
    grid-template-columns: 20px 20px 30px 20px;
    padding-left: 3px;
}

.small-grid button {
    display: flex;
    align-items: center;
    justify-content: center;
    gap: 4px;
    border: 1px solid #e2e2e5;
    background-color: #f4f4f6;
}

.draw .small-grid button {
    width: 32px;
}

.small-grid svg,
.layer-tools svg,
.combo svg {
    display: block;
    width: 14px;
    height: 14px;
}

.small-grid .caret,
.quick-access .caret,
.infocenter .caret {
    border-width: 3px 2px 0;
}

.column {
    flex-direction: column;
    gap: 2px;
    padding: 4px 2px 0;
}

.layer-tools {
    display: flex;
    justify-content: space-between;
    height: 19px;
}

.layer-tools button {
    display: flex;
    align-items: center;
    justify-content: center;
    width: 20px;
    border: 1px solid #e2e2e5;
}

.combo {
    display: flex;
    align-items: center;
    gap: 3px;
    height: 19px;
    padding: 0 2px;
    border: 1px solid #dedee2;
    background-color: #f4f4f6;
}

.combo select {
    flex: 1;
    min-width: 0;
    appearance: none;
}

.swatch {
    display: inline-block;
    width: 12px;
    height: 12px;
    border: 1px solid #555;
    background-color: #fff;
}

.collapsed {
    align-items: center;
    width: 50px;
    padding-top: 5px;
}

.collapsed .caret {
    margin-top: auto;
    margin-bottom: 4px;
}

/* Drawing area */
.canvas {
    position: relative;
    flex: 1;
    min-height: 400px;
    overflow: hidden;
    background-color: #202a32;
}

.drawing {
    position: absolute;
    width: 100%;
    height: 100%;
}

.drawing path {
    fill: none;
}

.grid-line {
    stroke: #26323a;
}

.dim-line {
    stroke: #9aa0a5;
}

.dim-arrow {
    stroke: #fff;
    stroke-width: 3;
}

.object-line {
    stroke: #e8ecef;
    stroke-width: 2;
}

.dim-text {
    fill: #c4c9cd;
    font-size: 12px;
}

.cursor {
    stroke: #8b9297;
    stroke-width: 2;
}

.viewport-label {
    position: absolute;
    top: 6px;
    left: 4px;
    color: #d0d3d6;
}

.viewport-controls {
    position: absolute;
    top: 8px;
    right: 9px;
    display: flex;
    gap: 7px;
}

.viewport-controls svg {
    display: block;
    width: 10px;
    height: 10px;
}

.viewcube {
    position: absolute;
    top: 36px;
    right: 17px;
    display: grid;
    grid-template: 22px 38px 22px / 22px 38px 22px;
    place-items: center;
    font-size: 14px;
    color: #a5a9b0;
}

.viewcube::before {
    content: "";
    position: absolute;
    inset: 0;
    border: 8px solid #484e58;
    border-radius: 50%;
}

.viewcube > * {
    position: relative;
}

.viewcube button {
    width: 36px;
    height: 36px;
    grid-area: 2 / 2;
    border: 2px solid #a8a8a8;
    background-color: #ccc;
    font-size: 9px;
    color: #555;
}

.north {
    grid-area: 1 / 2;
    place-self: start center;
    line-height: 8px;
}

.west {
    grid-area: 2 / 1;
    justify-self: start;
}

.east {
    grid-area: 2 / 3;
    justify-self: end;
}

.south {
    grid-area: 3 / 2;
    place-self: end center;
    line-height: 8px;
}

.ucs-menu {
    position: absolute;
    top: 136px;
    right: 38px;
    width: 40px;
    height: 15px;
    padding-left: 3px;
    border: 1px solid #9ba0a6;
    border-radius: 3px;
    background-color: #b4b8be;
    font-size: 9px;
    text-align: left;
    color: #777b82;
}

.navbar {
    position: absolute;
    top: 173px;
    right: 3px;
    width: 28px;
    height: 181px;
    border: 1px solid #7b7d85;
    border-radius: 2px;
    background-color: #686a73;
}

.ucs-icon {
    position: absolute;
    left: 0;
    bottom: 0;
    width: 80px;
    height: 72px;
}

.tooltip {
    position: absolute;
    top: 211px;
    left: 404px;
    width: 132px;
    height: 89px;
    padding: 9px;
    background: linear-gradient(#fff, #e2e2ee);
    box-shadow: 2px 2px 3px #0d1217;
    color: #77777c;
}

.tooltip h2 {
    margin: 0 0 6px;
    font-size: 10px;
    line-height: 12px;
    color: #555;
}

.tooltip dl {
    display: grid;
    grid-template-columns: 61px 1fr;
    margin: 0;
    line-height: 17px;
}

.tooltip dd {
    display: flex;
    align-items: center;
    gap: 2px;
    margin: 0;
}

.tooltip .swatch {
    width: 9px;
    height: 9px;
}

/* Layout tabs */
.layout-tabs {
    display: flex;
    height: 20px;
    padding: 0 0 4px 1px;
    border-top: 1px solid #888;
    background: linear-gradient(#eef2ee 15px, #707270 15px);
    line-height: 14px;
    color: #444;
}

.layout-tabs button {
    width: 12px;
    border-right: 1px solid #ccc;
    font-size: 8px;
    color: #555;
}

.layout-tabs a {
    padding: 0 5px;
}

.layout-tabs a:not(.current)::after {
    content: "/";
    margin-left: 6px;
}

.layout-tabs a + a {
    padding-right: 0;
}

.layout-tabs .current {
    padding: 0 10px;
    background-color: #1d2329;
    clip-path: polygon(0 0, 100% 0, 88% 100%, 12% 100%);
    color: #aaa;
}

/* Command line */
.command {
    border-left: 11px solid #aaa;
    background-color: #c8c8ca;
    font-family: "Liberation Mono", "Courier New", monospace;
    line-height: 13px;
    color: #333;
}

.command-log {
    height: 42px;
    padding-left: 1px;
}

.command-line {
    display: flex;
    height: 14px;
    padding: 1px 1px 0;
    background-color: #fafafa;
}

.command-line input {
    flex: 1;
}

/* Status bar */
.status {
    display: flex;
    align-items: center;
    gap: 6px;
    height: 22px;
    background: linear-gradient(#6e6e70, #969698 4px, #6c6c6e);
    color: #333;
}

.coords {
    width: 160px;
    padding-left: 8px;
}

.modes {
    display: flex;
    height: 20px;
}

.modes.right {
    margin-left: auto;
}

.modes button {
    display: flex;
    align-items: center;
    justify-content: center;
    width: 19px;
    border: 1px solid #8c8c8e;
    background-color: #acacae;
}

.modes .on {
    background-color: #b9dce8;
}

.modes .text {
    width: 46px;
}

.modes .menu {
    width: 12px;
}

.modes svg {
    width: 14px;
    height: 14px;
}

.grip {
    width: 12px;
    height: 14px;
}

.noise {
    position: absolute;
    top: 0;
    left: 100%;
    width: 8px;
    height: 100%;
}
```
